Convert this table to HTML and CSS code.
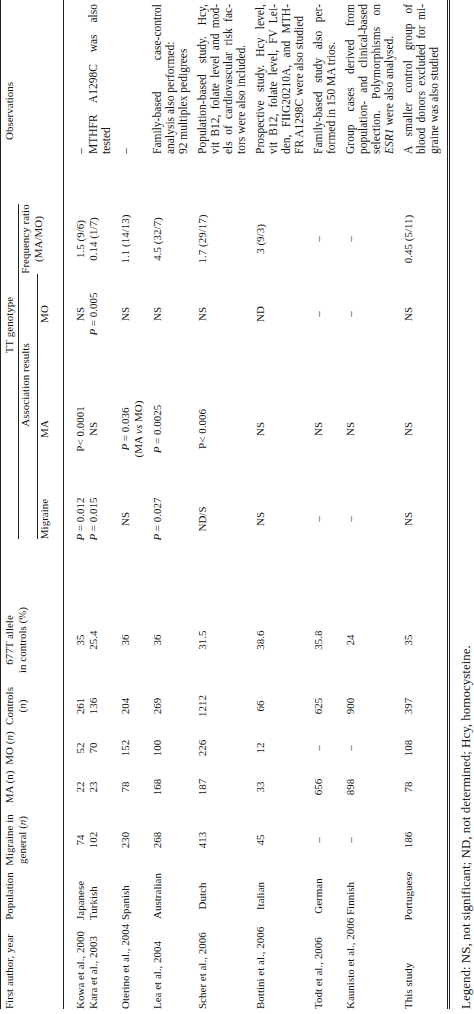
FILE: index.html
```html
<!DOCTYPE html>
<html lang="en">
<head>
<meta charset="utf-8">
<title>MTHFR C677T and migraine studies</title>
<link rel="stylesheet" href="styles.css">
</head>
<body>
<div class="viewport">
  <div class="page">
    <table class="tbl">
      <colgroup>
        <col class="w-author"><col class="w-pop"><col class="w-mig"><col class="w-ma"><col class="w-mo">
        <col class="w-ctrl"><col class="w-allele"><col class="w-tmig"><col class="w-tma"><col class="w-tmo">
        <col class="w-freq"><col class="w-obs">
      </colgroup>
      <thead>
        <tr class="h1">
          <th rowspan="3" class="left">First author, year</th>
          <th rowspan="3">Population</th>
          <th rowspan="3">Migraine in<br>general (<i>n</i>)</th>
          <th rowspan="3">MA (n)</th>
          <th rowspan="3">MO (<i>n</i>)</th>
          <th rowspan="3">Controls<br>(<i>n</i>)</th>
          <th rowspan="3">677T allele<br>in controls (%)</th>
          <th colspan="4"><div class="grp grp-tt">TT genotype</div></th>
          <th rowspan="3" class="obs-h">Observations</th>
        </tr>
        <tr class="h2">
          <th colspan="3"><div class="grp grp-as">Association results</div></th>
          <th rowspan="2">Frequency ratio<br>(MA/MO)</th>
        </tr>
        <tr class="h3">
          <th class="tmig">Migraine</th>
          <th>MA</th>
          <th class="tmo">MO</th>
        </tr>
      </thead>
      <tbody>
        <tr class="first">
          <td class="left">Kowa et al., 2000</td>
          <td class="pl">Japanese</td>
          <td>74</td><td>22</td><td>52</td><td>261</td><td>35</td>
          <td class="tmig"><i>P</i> = 0.012</td>
          <td>P&lt; 0.0001</td>
          <td class="tmo">NS</td>
          <td>1.5 (9/6)</td>
          <td class="obs"><span class="ln last">–</span></td>
        </tr>
        <tr class="tight">
          <td class="left">Kara et al., 2003</td>
          <td class="pl">Turkish</td>
          <td>102</td><td>23</td><td>70</td><td>136</td><td>25.4</td>
          <td class="tmig"><i>P</i> = 0.015</td>
          <td>NS</td>
          <td class="tmo"><i>P</i> = 0.005</td>
          <td>0.14 (1/7)</td>
          <td class="obs"><span class="ln">MTHFR A1298C was also</span><span class="ln last">tested</span></td>
        </tr>
        <tr>
          <td class="left">Oterino et al., 2004</td>
          <td class="pl">Spanish</td>
          <td>230</td><td>78</td><td>152</td><td>204</td><td>36</td>
          <td class="tmig">NS</td>
          <td><i>P</i> = 0.036<br>(MA <i>vs</i> MO)</td>
          <td class="tmo">NS</td>
          <td>1.1 (14/13)</td>
          <td class="obs"><span class="ln last">–</span></td>
        </tr>
        <tr>
          <td class="left">Lea et al., 2004</td>
          <td>Australian</td>
          <td>268</td><td>168</td><td>100</td><td>269</td><td>36</td>
          <td class="tmig"><i>P</i> = 0.027</td>
          <td><i>P</i> = 0.0025</td>
          <td class="tmo">NS</td>
          <td>4.5 (32/7)</td>
          <td class="obs"><span class="ln">Family-based case-control</span><span class="ln last">analysis also performed:</span><span class="ln last">92 multiplex pedigrees</span></td>
        </tr>
        <tr>
          <td class="left">Scher et al., 2006</td>
          <td>Dutch</td>
          <td>413</td><td>187</td><td>226</td><td>1212</td><td>31.5</td>
          <td class="tmig">ND/S</td>
          <td>P&lt; 0.006</td>
          <td class="tmo">NS</td>
          <td>1.7 (29/17)</td>
          <td class="obs"><span class="ln">Population-based study. Hcy,</span><span class="ln">vit B12, folate level and mod-</span><span class="ln">els of cardiovascular risk fac-</span><span class="ln last">tors were also included.</span></td>
        </tr>
        <tr>
          <td class="left">Bottini et al., 2006</td>
          <td>Italian</td>
          <td>45</td><td>33</td><td>12</td><td>66</td><td>38.6</td>
          <td class="tmig">NS</td>
          <td>NS</td>
          <td class="tmo">ND</td>
          <td>3 (9/3)</td>
          <td class="obs"><span class="ln">Prospective study. Hcy level,</span><span class="ln">vit B12, folate level, FV Lei-</span><span class="ln">den, FIIG20210A, and MTH-</span><span class="ln last">FR A1298C were also studied</span></td>
        </tr>
        <tr>
          <td class="left">Todt et al., 2006</td>
          <td>German</td>
          <td>–</td><td>656</td><td>–</td><td>625</td><td>35.8</td>
          <td class="tmig">–</td>
          <td>NS</td>
          <td class="tmo">–</td>
          <td>–</td>
          <td class="obs"><span class="ln">Family-based study also per-</span><span class="ln last">formed in 150 MA trios.</span></td>
        </tr>
        <tr>
          <td class="left">Kaunisto et al., 2006</td>
          <td class="pl2">Finnish</td>
          <td>–</td><td>898</td><td>–</td><td>900</td><td>24</td>
          <td class="tmig">–</td>
          <td>NS</td>
          <td class="tmo">–</td>
          <td>–</td>
          <td class="obs"><span class="ln">Group cases derived from</span><span class="ln">population- and clinical-based</span><span class="ln">selection. Polymorphisms on</span><span class="ln last"><i>ESR1</i> were also analysed.</span></td>
        </tr>
        <tr class="end">
          <td class="left">This study</td>
          <td>Portuguese</td>
          <td>186</td><td>78</td><td>108</td><td>397</td><td>35</td>
          <td class="tmig">NS</td>
          <td>NS</td>
          <td class="tmo">NS</td>
          <td>0.45 (5/11)</td>
          <td class="obs"><span class="ln">A smaller control group of</span><span class="ln">blood donors excluded for mi-</span><span class="ln last">graine was also studied</span></td>
        </tr>
      </tbody>
    </table>
    <p class="legend">Legend: NS, not significant; ND, not determined; Hcy, homocysteine.</p>
  </div>
</div>
</body>
</html>
```

FILE: styles.css
```css
html, body {
  margin: 0;
  padding: 0;
  background: #ffffff;
}

body {
  overflow: hidden;
}

.viewport {
  width: 474px;
  height: 1014px;
  overflow: hidden;
}

/* the table is printed sideways: lay it out normally, then turn it a quarter turn counter-clockwise */
.page {
  width: 1014px;
  height: 474px;
  transform-origin: 0 0;
  transform: translateY(1014px) rotate(-90deg);
  font-family: "Liberation Serif", "Times New Roman", serif;
  font-size: 11px;
  line-height: 13px;
  color: #161616;
}

.tbl {
  width: 1014px;
  table-layout: fixed;
  border-collapse: collapse;
  margin-top: -5px;
  border-top: 1px solid #222;
}

.w-author { width: 88px; }
.w-pop { width: 50px; }
.w-mig { width: 62px; }
.w-ma { width: 44px; }
.w-mo { width: 34px; }
.w-ctrl { width: 50px; }
.w-allele { width: 82px; }
.w-tmig { width: 130px; }
.w-tma { width: 80px; }
.w-tmo { width: 115px; }
.w-freq { width: 70px; }
.w-obs { width: 209px; }

th, td {
  padding: 0;
  font-weight: normal;
  vertical-align: top;
  text-align: center;
  white-space: nowrap;
}

.h1 th {
  padding-top: 2px;
}

.h3 th {
  padding-bottom: 12px;
}

.grp {
  margin-left: 60px;
  border-bottom: 1px solid #222;
}

.grp-tt {
  padding-bottom: 2px;
  padding-left: 93px;
}

.grp-as {
  padding-bottom: 5px;
  padding-left: 43px;
}

.left {
  text-align: left;
}

.pl {
  text-align: left;
  padding-left: 1px;
}

.pl2 {
  text-align: left;
  padding-left: 6px;
}

.tmig {
  padding-left: 30px;
}

.tmo {
  padding-left: 35px;
}

.obs-h {
  text-align: left;
  padding-left: 64px;
}

tbody td {
  padding-top: 6px;
}

tbody tr.first td {
  padding-top: 10px;
  border-top: 1px solid #222;
}

tbody tr.tight td {
  padding-top: 0;
}

tbody tr.end td {
  padding-bottom: 6px;
  border-bottom: 3px double #222;
}

td.obs {
  padding-left: 50px;
  padding-right: 9px;
  text-align: left;
  white-space: normal;
  font-size: 11.5px;
}

.ln {
  display: block;
  text-align: justify;
  text-align-last: justify;
  white-space: nowrap;
}

.ln.last {
  text-align-last: left;
}

.legend {
  margin: 8px 0 0 0;
  font-size: 13px;
  line-height: 15px;
  white-space: nowrap;
}
```
